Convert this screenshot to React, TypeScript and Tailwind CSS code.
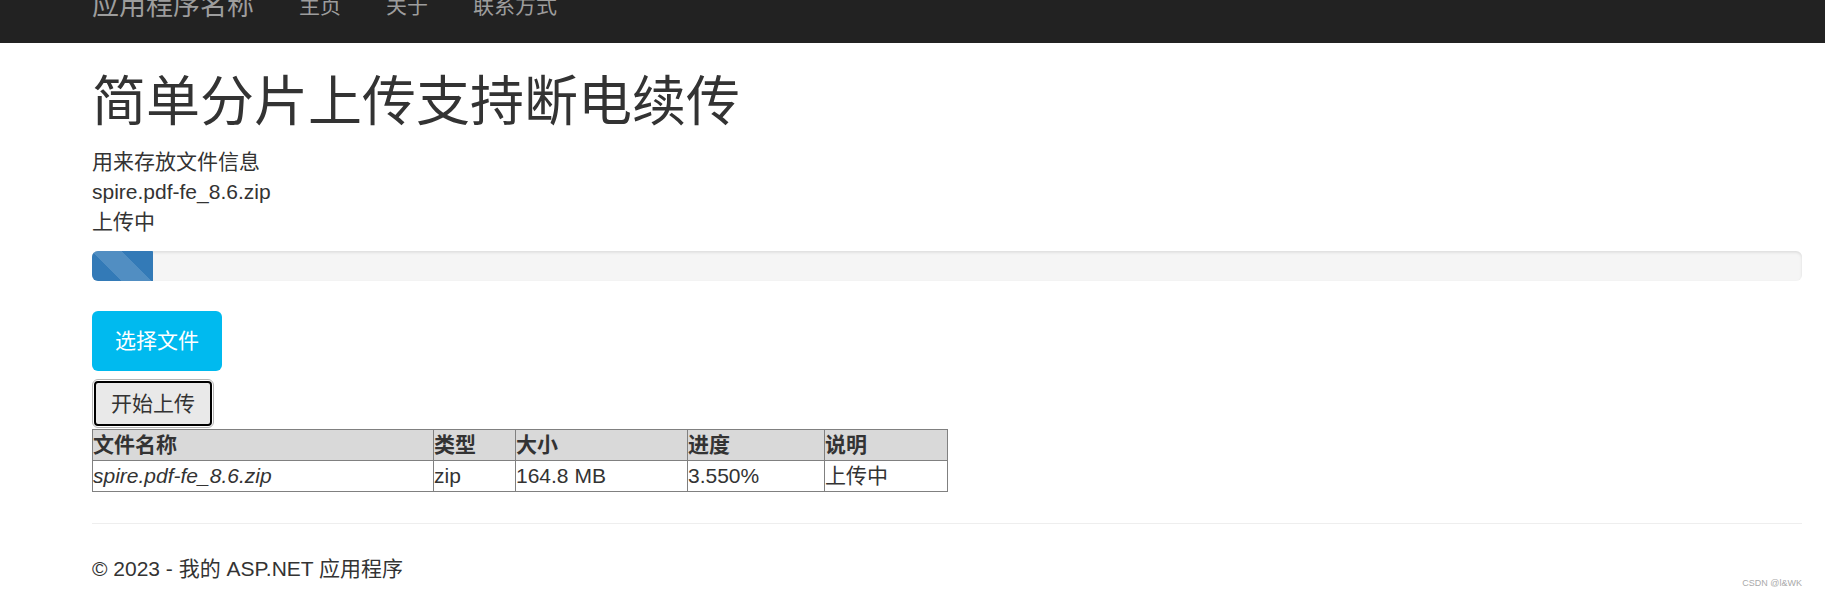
import React from "react";

const files = [
  { name: "spire.pdf-fe_8.6.zip", type: "zip", size: "164.8 MB", progress: 3.55, note: "上传中" },
];

const App = () => {
  const current = files[0];

  return (
    <div className="relative min-h-[596px] bg-white text-[21px] leading-[30px] text-[#333] font-['Liberation_Sans','Noto_Sans_CJK_SC',sans-serif]">
      {/* Navbar (top part scrolled out of view) */}
      <header className="h-[43px] overflow-hidden bg-[#222]">
        <div className="-mt-[32px] flex h-[75px] items-start pl-[92px] text-[#9d9d9d]">
          <a className="pt-[22.5px] pr-[22.5px] text-[27px] leading-[30px]">应用程序名称</a>
          <nav className="flex">
            <a className="px-[22.5px] pt-[22.5px] leading-[30px]">主页</a>
            <a className="px-[22.5px] pt-[22.5px] leading-[30px]">关于</a>
            <a className="px-[22.5px] pt-[22.5px] leading-[30px]">联系方式</a>
          </nav>
        </div>
      </header>

      <main className="pl-[92px] pr-[23px]">
        <h1 className="mt-[27px] mb-[12px] text-[54px] leading-[65px] font-normal">简单分片上传支持断电续传</h1>

        {/* File info */}
        <div>用来存放文件信息</div>
        <div>{current.name}</div>
        <div>{current.note}</div>

        {/* Progress */}
        <div className="mt-[14px] h-[30px] overflow-hidden rounded-[6px] bg-[#f5f5f5] shadow-[inset_0_1.5px_3px_rgba(0,0,0,0.1)]">
          <div
            className="h-full bg-[#337ab7] bg-[linear-gradient(45deg,rgba(255,255,255,0.15)_25%,transparent_25%,transparent_50%,rgba(255,255,255,0.15)_50%,rgba(255,255,255,0.15)_75%,transparent_75%,transparent)] bg-[length:60px_60px]"
            style={{ width: `${current.progress}%` }}
          />
        </div>

        {/* Buttons */}
        <button className="mt-[30px] flex h-[60px] w-[130px] items-center justify-center rounded-[6px] bg-[#00baef] text-white">
          选择文件
        </button>
        <button className="mt-[8px] block h-[49px] w-[122px] rounded-[6px] border border-[#b5b5b5] bg-white p-[1px]">
          <span className="flex h-full w-full items-center justify-center rounded-[4px] border-2 border-black bg-[#e9e9e9] text-[#333]">
            开始上传
          </span>
        </button>

        {/* File table */}
        <table className="mt-[1px] w-[855px] table-fixed border-collapse border border-[#808080]">
          <colgroup>
            <col className="w-[341px]" />
            <col className="w-[82px]" />
            <col className="w-[172px]" />
            <col className="w-[137px]" />
            <col className="w-[123px]" />
          </colgroup>
          <thead>
            <tr className="bg-[#d9d9d9]">
              <th className="border border-[#808080] p-0 text-left font-bold">文件名称</th>
              <th className="border border-[#808080] p-0 text-left font-bold">类型</th>
              <th className="border border-[#808080] p-0 text-left font-bold">大小</th>
              <th className="border border-[#808080] p-0 text-left font-bold">进度</th>
              <th className="border border-[#808080] p-0 text-left font-bold">说明</th>
            </tr>
          </thead>
          <tbody>
            {files.map((f) => (
              <tr key={f.name}>
                <td className="border border-[#808080] p-0 italic">{f.name}</td>
                <td className="border border-[#808080] p-0">{f.type}</td>
                <td className="border border-[#808080] p-0">{f.size}</td>
                <td className="border border-[#808080] p-0">{f.progress.toFixed(3)}%</td>
                <td className="border border-[#808080] p-0">{f.note}</td>
              </tr>
            ))}
          </tbody>
        </table>

        <hr className="mt-[31px] border-t border-[#eee]" />

        {/* Footer */}
        <footer className="mt-[30px]">© 2023 - 我的 ASP.NET 应用程序</footer>
      </main>

      {/* Watermark */}
      <div className="absolute right-[23px] bottom-[7px] text-[9px] leading-[12px] text-[#aaa]">CSDN @l&amp;WK</div>
    </div>
  );
};

export default App;
